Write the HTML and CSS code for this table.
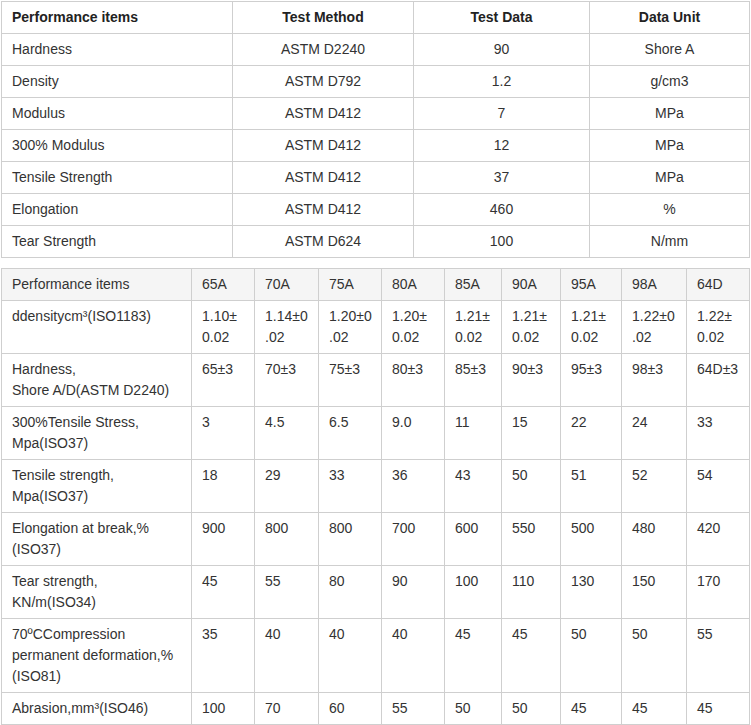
FILE: index.html
```html
<!DOCTYPE html>
<html>
<head>
<meta charset="utf-8">
<link rel="stylesheet" href="styles.css">
</head>
<body>
<div class="page">
<table class="spec">
  <colgroup><col class="c1"><col class="c2"><col class="c3"><col class="c4"></colgroup>
  <thead>
    <tr><th class="left">Performance items</th><th>Test Method</th><th>Test Data</th><th>Data Unit</th></tr>
  </thead>
  <tbody>
    <tr><td class="left">Hardness</td><td>ASTM D2240</td><td>90</td><td>Shore A</td></tr>
    <tr><td class="left">Density</td><td>ASTM D792</td><td>1.2</td><td>g/cm3</td></tr>
    <tr><td class="left">Modulus</td><td>ASTM D412</td><td>7</td><td>MPa</td></tr>
    <tr><td class="left">300% Modulus</td><td>ASTM D412</td><td>12</td><td>MPa</td></tr>
    <tr><td class="left">Tensile Strength</td><td>ASTM D412</td><td>37</td><td>MPa</td></tr>
    <tr><td class="left">Elongation</td><td>ASTM D412</td><td>460</td><td>%</td></tr>
    <tr><td class="left">Tear Strength</td><td>ASTM D624</td><td>100</td><td>N/mm</td></tr>
  </tbody>
</table>

<table class="grades">
  <colgroup>
    <col class="g0"><col class="g1"><col class="g2"><col class="g3"><col class="g4">
    <col class="g5"><col class="g6"><col class="g7"><col class="g8"><col class="g9">
  </colgroup>
  <thead>
    <tr><td>Performance items</td><td>65A</td><td>70A</td><td>75A</td><td>80A</td><td>85A</td><td>90A</td><td>95A</td><td>98A</td><td>64D</td></tr>
  </thead>
  <tbody>
    <tr><td>ddensitycm³(ISO1183)</td><td>1.10±<br>0.02</td><td>1.14±0<br>.02</td><td>1.20±0<br>.02</td><td>1.20±<br>0.02</td><td>1.21±<br>0.02</td><td>1.21±<br>0.02</td><td>1.21±<br>0.02</td><td>1.22±0<br>.02</td><td>1.22±<br>0.02</td></tr>
    <tr><td>Hardness,<br>Shore A/D(ASTM D2240)</td><td>65±3</td><td>70±3</td><td>75±3</td><td>80±3</td><td>85±3</td><td>90±3</td><td>95±3</td><td>98±3</td><td>64D±3</td></tr>
    <tr><td>300%Tensile Stress,<br>Mpa(ISO37)</td><td>3</td><td>4.5</td><td>6.5</td><td>9.0</td><td>11</td><td>15</td><td>22</td><td>24</td><td>33</td></tr>
    <tr><td>Tensile strength,<br>Mpa(ISO37)</td><td>18</td><td>29</td><td>33</td><td>36</td><td>43</td><td>50</td><td>51</td><td>52</td><td>54</td></tr>
    <tr><td>Elongation at break,%<br>(ISO37)</td><td>900</td><td>800</td><td>800</td><td>700</td><td>600</td><td>550</td><td>500</td><td>480</td><td>420</td></tr>
    <tr><td>Tear strength,<br>KN/m(ISO34)</td><td>45</td><td>55</td><td>80</td><td>90</td><td>100</td><td>110</td><td>130</td><td>150</td><td>170</td></tr>
    <tr><td>70ºCCompression<br>permanent deformation,%<br>(ISO81)</td><td>35</td><td>40</td><td>40</td><td>40</td><td>45</td><td>45</td><td>50</td><td>50</td><td>55</td></tr>
    <tr><td>Abrasion,mm³(ISO46)</td><td>100</td><td>70</td><td>60</td><td>55</td><td>50</td><td>50</td><td>45</td><td>45</td><td>45</td></tr>
  </tbody>
</table>
</div>
</body>
</html>
```

FILE: styles.css
```css
html, body {
  margin: 0;
  padding: 0;
  background: #ffffff;
}

.page {
  font-family: "Liberation Sans", Arial, sans-serif;
  font-size: 14px;
  color: #333333;
}

table {
  border-collapse: collapse;
  table-layout: fixed;
  width: 749px;
}

td, th {
  border: 1px solid #cfcfcf;
  padding: 5px 10px;
  line-height: 21px;
  white-space: nowrap;
  overflow: hidden;
}

.spec {
  margin: 1px 0 0 1px;
}

.spec th {
  font-weight: bold;
  text-align: center;
  color: #222;
}

.spec td {
  text-align: center;
}

.spec .left {
  text-align: left;
}

.c1 { width: 231px; }
.c2 { width: 181px; }
.c3 { width: 176px; }
.c4 { width: 160px; }

.grades {
  margin: 10px 0 0 1px;
}

.grades td {
  text-align: left;
  vertical-align: top;
}

.grades thead td {
  background: #f5f5f5;
}

.g0 { width: 190px; }
.g1 { width: 63px; }
.g2 { width: 64px; }
.g3 { width: 63px; }
.g4 { width: 63px; }
.g5 { width: 57px; }
.g6 { width: 59px; }
.g7 { width: 61px; }
.g8 { width: 65px; }
.g9 { width: 63px; }
```
